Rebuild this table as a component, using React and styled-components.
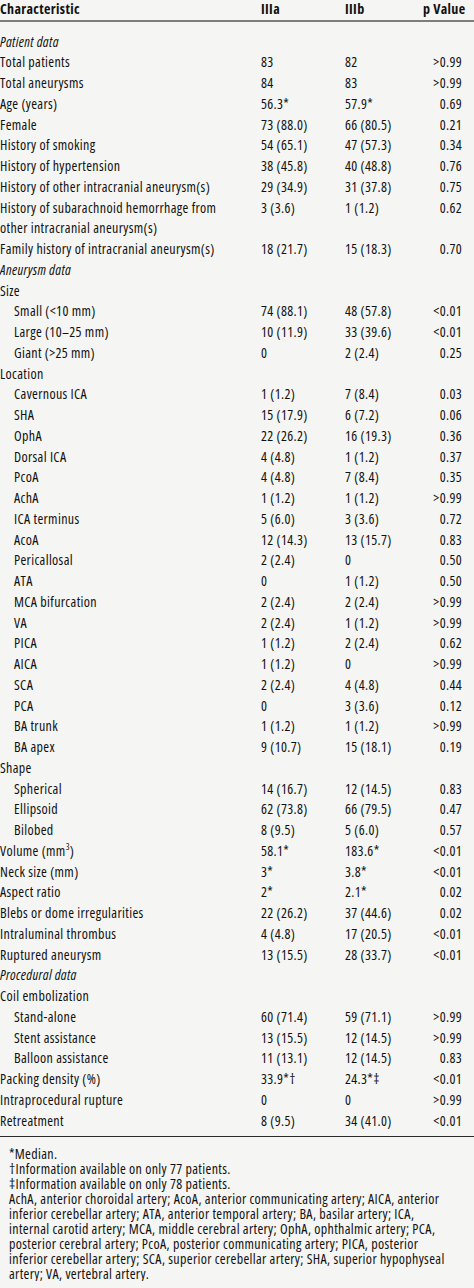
import React from "react";
import styled, { createGlobalStyle } from "styled-components";

const GlobalStyle = createGlobalStyle`
  html, body {
    margin: 0;
    padding: 0;
    background: #f5f5f3;
    overflow-x: hidden;
  }
  body {
    font-family: "Open Sans", "DejaVu Sans Condensed", sans-serif;
    font-stretch: 75%;
    color: #111;
  }
`;

const Page = styled.div`
  width: 474px;
  font-size: 14px;
  letter-spacing: 0.35px;
  overflow: hidden;
`;

const Grid = styled.div`
  display: grid;
  grid-template-columns: 261px 84px 55px 62px;
`;

const HeadRow = styled(Grid)`
  height: 18px;
  padding-top: 2px;
  border-bottom: 2px solid #7d7d7d;
  font-weight: bold;
  line-height: 14px;
`;

const HeadCell = styled.div`
  white-space: nowrap;
  padding-left: ${(p) => p.$pad || 0}px;
`;

const Body = styled.div`
  padding: 9.6px 0 4.6px;
  border-bottom: 1.5px solid #2a2a2a;
`;

const Row = styled(Grid)`
  line-height: 20.75px;
`;

const Label = styled.div`
  padding-left: ${(p) => (p.$indent ? 14 : 0)}px;
  font-style: ${(p) => (p.$italic ? "italic" : "normal")};
  padding-right: 20px;
`;

const Value = styled.div`
  white-space: nowrap;
`;

const PValue = styled.div`
  white-space: nowrap;
  text-align: right;
`;

const Sup = styled.sup`
  font-size: 9px;
  line-height: 0;
`;

const Notes = styled.div`
  padding: 9px 24px 0 9px;
  line-height: 15px;
`;

const Note = styled.div``;

const rows = [
  { label: "Patient data", kind: "section" },
  { label: "Total patients", a: "83", b: "82", p: ">0.99" },
  { label: "Total aneurysms", a: "84", b: "83", p: ">0.99" },
  { label: "Age (years)", a: "56.3*", b: "57.9*", p: "0.69" },
  { label: "Female", a: "73 (88.0)", b: "66 (80.5)", p: "0.21" },
  { label: "History of smoking", a: "54 (65.1)", b: "47 (57.3)", p: "0.34" },
  { label: "History of hypertension", a: "38 (45.8)", b: "40 (48.8)", p: "0.76" },
  { label: "History of other intracranial aneurysm(s)", a: "29 (34.9)", b: "31 (37.8)", p: "0.75" },
  { label: "History of subarachnoid hemorrhage from other intracranial aneurysm(s)", a: "3 (3.6)", b: "1 (1.2)", p: "0.62" },
  { label: "Family history of intracranial aneurysm(s)", a: "18 (21.7)", b: "15 (18.3)", p: "0.70" },
  { label: "Aneurysm data", kind: "section" },
  { label: "Size" },
  { label: "Small (<10 mm)", a: "74 (88.1)", b: "48 (57.8)", p: "<0.01", sub: true },
  { label: "Large (10–25 mm)", a: "10 (11.9)", b: "33 (39.6)", p: "<0.01", sub: true },
  { label: "Giant (>25 mm)", a: "0", b: "2 (2.4)", p: "0.25", sub: true },
  { label: "Location" },
  { label: "Cavernous ICA", a: "1 (1.2)", b: "7 (8.4)", p: "0.03", sub: true },
  { label: "SHA", a: "15 (17.9)", b: "6 (7.2)", p: "0.06", sub: true },
  { label: "OphA", a: "22 (26.2)", b: "16 (19.3)", p: "0.36", sub: true },
  { label: "Dorsal ICA", a: "4 (4.8)", b: "1 (1.2)", p: "0.37", sub: true },
  { label: "PcoA", a: "4 (4.8)", b: "7 (8.4)", p: "0.35", sub: true },
  { label: "AchA", a: "1 (1.2)", b: "1 (1.2)", p: ">0.99", sub: true },
  { label: "ICA terminus", a: "5 (6.0)", b: "3 (3.6)", p: "0.72", sub: true },
  { label: "AcoA", a: "12 (14.3)", b: "13 (15.7)", p: "0.83", sub: true },
  { label: "Pericallosal", a: "2 (2.4)", b: "0", p: "0.50", sub: true },
  { label: "ATA", a: "0", b: "1 (1.2)", p: "0.50", sub: true },
  { label: "MCA bifurcation", a: "2 (2.4)", b: "2 (2.4)", p: ">0.99", sub: true },
  { label: "VA", a: "2 (2.4)", b: "1 (1.2)", p: ">0.99", sub: true },
  { label: "PICA", a: "1 (1.2)", b: "2 (2.4)", p: "0.62", sub: true },
  { label: "AICA", a: "1 (1.2)", b: "0", p: ">0.99", sub: true },
  { label: "SCA", a: "2 (2.4)", b: "4 (4.8)", p: "0.44", sub: true },
  { label: "PCA", a: "0", b: "3 (3.6)", p: "0.12", sub: true },
  { label: "BA trunk", a: "1 (1.2)", b: "1 (1.2)", p: ">0.99", sub: true },
  { label: "BA apex", a: "9 (10.7)", b: "15 (18.1)", p: "0.19", sub: true },
  { label: "Shape" },
  { label: "Spherical", a: "14 (16.7)", b: "12 (14.5)", p: "0.83", sub: true },
  { label: "Ellipsoid", a: "62 (73.8)", b: "66 (79.5)", p: "0.47", sub: true },
  { label: "Bilobed", a: "8 (9.5)", b: "5 (6.0)", p: "0.57", sub: true },
  { label: "Volume (mm", sup: "3", after: ")", a: "58.1*", b: "183.6*", p: "<0.01" },
  { label: "Neck size (mm)", a: "3*", b: "3.8*", p: "<0.01" },
  { label: "Aspect ratio", a: "2*", b: "2.1*", p: "0.02" },
  { label: "Blebs or dome irregularities", a: "22 (26.2)", b: "37 (44.6)", p: "0.02" },
  { label: "Intraluminal thrombus", a: "4 (4.8)", b: "17 (20.5)", p: "<0.01" },
  { label: "Ruptured aneurysm", a: "13 (15.5)", b: "28 (33.7)", p: "<0.01" },
  { label: "Procedural data", kind: "section" },
  { label: "Coil embolization" },
  { label: "Stand-alone", a: "60 (71.4)", b: "59 (71.1)", p: ">0.99", sub: true },
  { label: "Stent assistance", a: "13 (15.5)", b: "12 (14.5)", p: ">0.99", sub: true },
  { label: "Balloon assistance", a: "11 (13.1)", b: "12 (14.5)", p: "0.83", sub: true },
  { label: "Packing density (%)", a: "33.9*†", b: "24.3*‡", p: "<0.01" },
  { label: "Intraprocedural rupture", a: "0", b: "0", p: ">0.99" },
  { label: "Retreatment", a: "8 (9.5)", b: "34 (41.0)", p: "<0.01" },
];

const notes = [
  "*Median.",
  "†Information available on only 77 patients.",
  "‡Information available on only 78 patients.",
  "AchA, anterior choroidal artery; AcoA, anterior communicating artery; AICA, anterior inferior cerebellar artery; ATA, anterior temporal artery; BA, basilar artery; ICA, internal carotid artery; MCA, middle cerebral artery; OphA, ophthalmic artery; PCA, posterior cerebral artery; PcoA, posterior communicating artery; PICA, posterior inferior cerebellar artery; SCA, superior cerebellar artery; SHA, superior hypophyseal artery; VA, vertebral artery.",
];

export default function App() {
  return (
    <Page>
      <GlobalStyle />
      <HeadRow>
        <HeadCell>Characteristic</HeadCell>
        <HeadCell>IIIa</HeadCell>
        <HeadCell>IIIb</HeadCell>
        <HeadCell $pad={23}>p Value</HeadCell>
      </HeadRow>
      <Body>
        {rows.map((r, i) => (
          <Row key={i}>
            <Label $indent={r.sub} $italic={r.kind === "section"}>
              {r.label}
              {r.sup && <Sup>{r.sup}</Sup>}
              {r.after}
            </Label>
            <Value>{r.a}</Value>
            <Value>{r.b}</Value>
            <PValue>{r.p}</PValue>
          </Row>
        ))}
      </Body>
      <Notes>
        {notes.map((n, i) => (
          <Note key={i}>{n}</Note>
        ))}
      </Notes>
    </Page>
  );
}
